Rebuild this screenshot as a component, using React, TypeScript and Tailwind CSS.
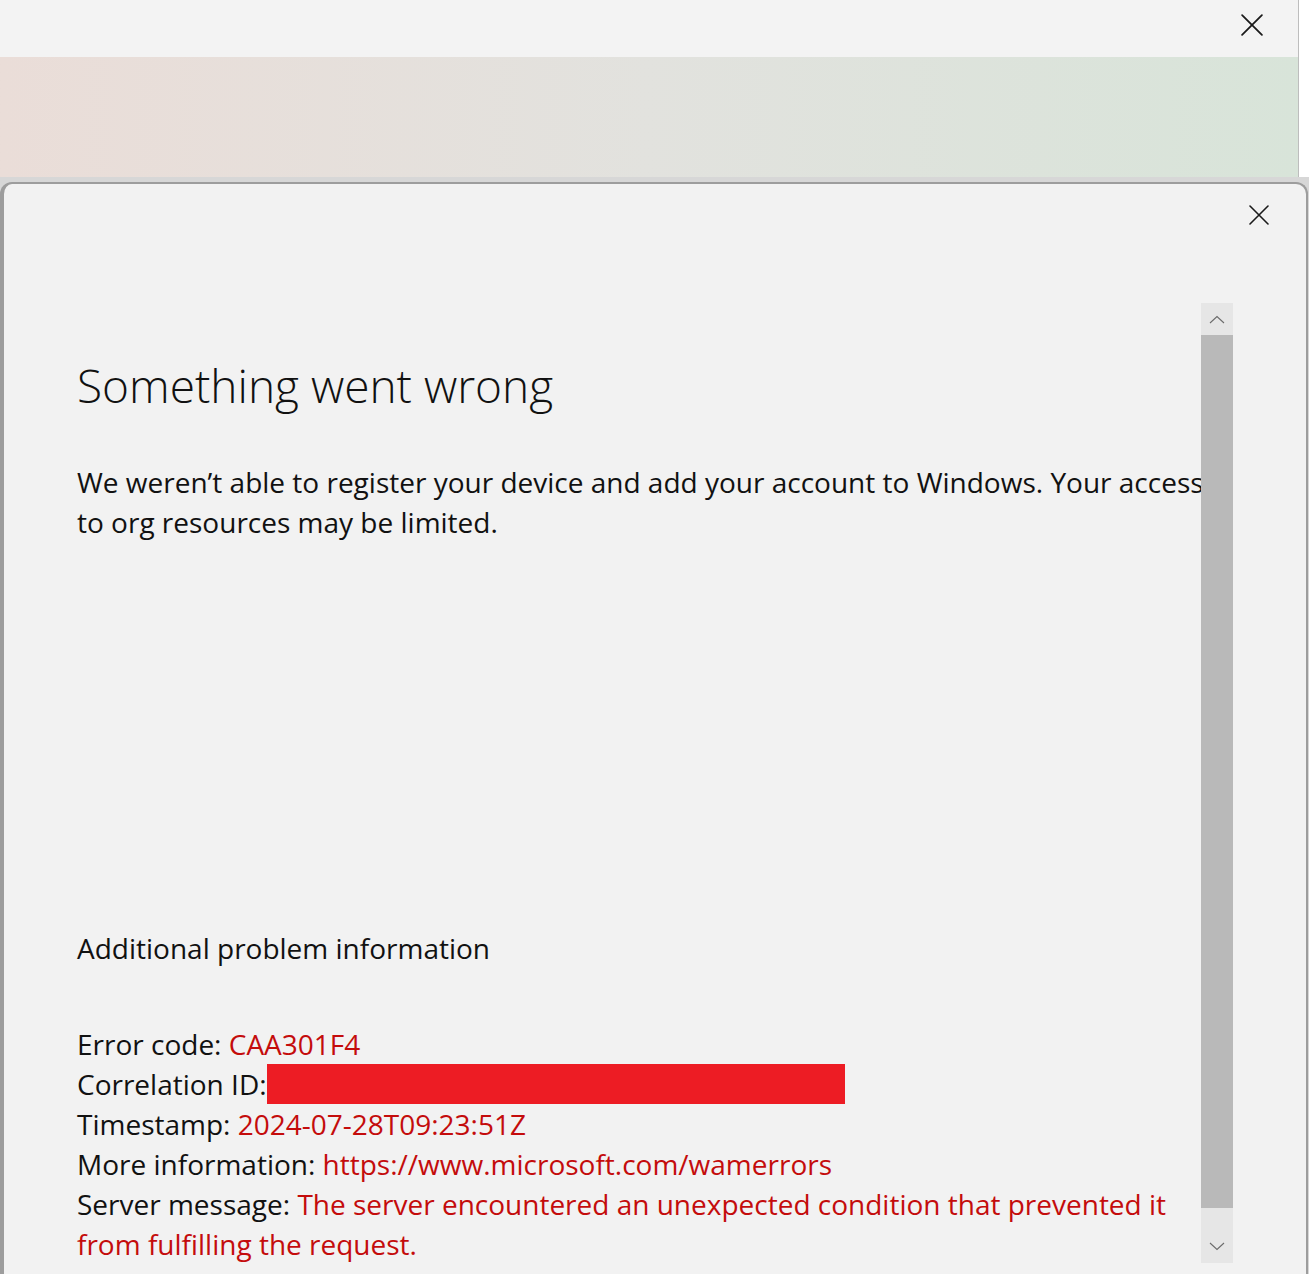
const FONT = "font-['Open_Sans',sans-serif]";

function CloseIcon({ size }: { size: number }) {
  return (
    <svg width={size} height={size} viewBox="0 0 20 20" fill="none" aria-hidden="true">
      <path d="M1 1L19 19M19 1L1 19" stroke="#1a1a1a" strokeWidth="1.6" strokeLinecap="round" />
    </svg>
  );
}

function Chevron({ up }: { up?: boolean }) {
  return (
    <svg width="16" height="9" viewBox="0 0 16 9" fill="none" aria-hidden="true">
      <path
        d={up ? "M1 8L8 1.5L15 8" : "M1 1L8 7.5L15 1"}
        stroke="#6b6b6b"
        strokeWidth="1.1"
      />
    </svg>
  );
}

function Scrollbar() {
  return (
    <div className="flex h-[960px] w-8 shrink-0 flex-col bg-[#e6e6e6]">
      <div className="flex h-8 items-center justify-center">
        <Chevron up />
      </div>
      <div className="h-[873px] bg-[#b9b9b9]" />
      <div className="flex flex-1 items-end justify-center pb-[12px]">
        <Chevron />
      </div>
    </div>
  );
}

function Row({ label, children }: { label: string; children: React.ReactNode }) {
  return (
    <div className="h-10 whitespace-nowrap">
      {label}
      {children}
    </div>
  );
}

export default function App() {
  return (
    <div className={`h-[1274px] w-[1309px] overflow-hidden bg-white text-[#111] ${FONT}`}>
      {/* window behind the dialog */}
      <div className="h-[177px] w-[1299px] border-r border-[#bdbdbd]">
        <div className="flex h-[57px] items-start justify-end bg-[#f3f3f3] pt-[14px] pr-[35px]">
          <CloseIcon size={22} />
        </div>
        <div className="h-[120px] bg-linear-to-r from-[#eaddd8] via-[#e2e2de] to-[#d8e4d9]" />
      </div>

      {/* dialog */}
      <div className="bg-[#d7d7d7] pt-[5px]">
        <div className="h-[1092px] w-[1308px] overflow-hidden rounded-t-[12px] border-t-2 border-r-2 border-l-4 border-[#9d9d9d] bg-[#f2f2f2]">
          <div className="flex h-[119px] items-start justify-end pt-[21px] pr-[37px]">
            <CloseIcon size={20} />
          </div>
          <div className="flex pr-[73px]">
            <div className="min-w-0 flex-1 overflow-hidden pl-[73px]">
              <h1 className="mt-[54px] whitespace-nowrap text-[46px] leading-[56px] font-light">
                Something went wrong
              </h1>
              <div className="mt-[49px] text-[28px] leading-10">
                <p className="whitespace-nowrap">
                  We weren’t able to register your device and add your account to Windows. Your access
                </p>
                <p className="whitespace-nowrap">to org resources may be limited.</p>
              </div>
              <h2 className="mt-[386px] h-10 text-[28px] leading-10 font-normal">
                Additional problem information
              </h2>
              <div className="mt-[56px] text-[28px] leading-10">
                <Row label="Error code: ">
                  <span className="text-[#c40c0c]">CAA301F4</span>
                </Row>
                <Row label="Correlation ID:">
                  <span className="inline-block h-10 w-[578px] bg-[#ed1c24] align-top" />
                </Row>
                <Row label="Timestamp: ">
                  <span className="text-[#c40c0c]">2024-07-28T09:23:51Z</span>
                </Row>
                <Row label="More information: ">
                  <a className="text-[#c40c0c]">https://www.microsoft.com/wamerrors</a>
                </Row>
                <Row label="Server message: ">
                  <span className="text-[#c40c0c]">
                    The server encountered an unexpected condition that prevented it
                  </span>
                </Row>
                <div className="h-10 whitespace-nowrap text-[#c40c0c]">from fulfilling the request.</div>
              </div>
            </div>
            <Scrollbar />
          </div>
        </div>
      </div>
    </div>
  );
}
